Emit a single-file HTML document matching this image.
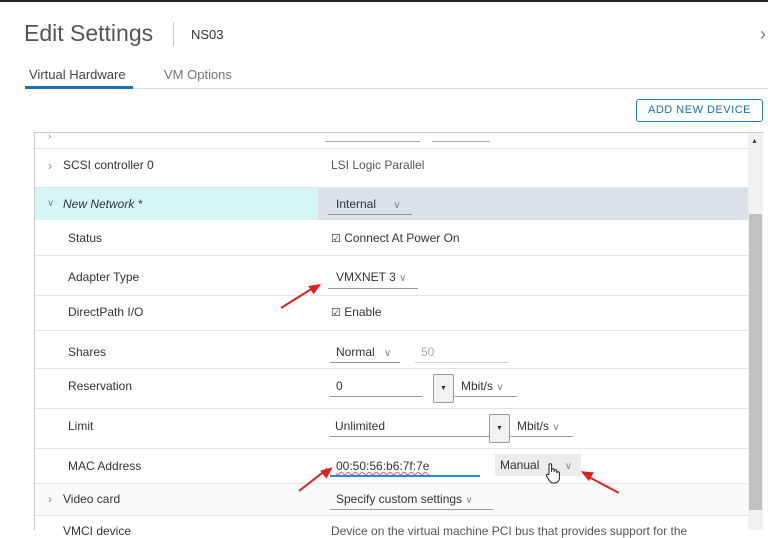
<!DOCTYPE html><html><head><style>
body{margin:0;width:768px;height:530px;overflow:hidden;background:#fff;font-family:"Liberation Sans",sans-serif;position:relative;color:#333}
.a{position:absolute}
.t{font-size:12px;color:#333}
.row{position:absolute;left:35px;width:713px;border-bottom:1px solid #e4e4e4}
.ul{position:absolute;border-bottom:1px solid #999;height:0}
.chev{color:#888;font-size:10px}
.arrow{position:absolute;height:2px;background:#e02020;transform-origin:left center}
</style></head><body>
<div class="a" style="left:0;top:0;width:768px;height:2px;background:#222"></div>
<div class="a" style="left:24px;top:20px;font-size:23px;color:#555">Edit Settings</div>
<div class="a" style="left:173px;top:22px;width:1px;height:24px;background:#ccc"></div>
<div class="a" style="left:191px;top:27px;font-size:13px;color:#333">NS03</div>
<div class="a" style="left:760px;top:24px;font-size:18px;color:#777">›</div>
<div class="a" style="left:29px;top:67px;font-size:13px;color:#444">Virtual Hardware</div>
<div class="a" style="left:164px;top:67px;font-size:13px;color:#777">VM Options</div>
<div class="a" style="left:25px;top:88px;width:743px;height:1px;background:#ddd"></div>
<div class="a" style="left:25px;top:86px;width:108px;height:3px;background:#1a73b8"></div>
<div class="a" style="left:636px;top:99px;width:125px;height:21px;border:1px solid #2a7ab8;border-radius:3px;color:#1a6fb0;font-size:11px;text-align:center;line-height:21px;letter-spacing:.5px">ADD NEW DEVICE</div>
<div class="a" style="left:34px;top:132px;width:1px;height:398px;background:#ccc"></div>
<div class="a" style="left:34px;top:132px;width:730px;height:1px;background:#ccc"></div>
<div class="a" style="left:748px;top:133px;width:15px;height:397px;background:#f1f1f1"></div>
<div class="a" style="left:751px;top:138px;font-size:7px;color:#444">▲</div>
<div class="a" style="left:749px;top:214px;width:13px;height:296px;background:#c1c1c1"></div>
<div class="row" style="top:133px;height:15px"></div>
<div class="a t chev" style="left:48px;top:131px">›</div>
<div class="ul" style="left:325px;top:141px;width:95px;border-color:#aaa"></div>
<div class="ul" style="left:432px;top:141px;width:58px;border-color:#aaa"></div>
<div class="row" style="top:149px;height:38px"></div>
<div class="a chev" style="left:48px;top:159px;font-size:12px">›</div>
<div class="a t" style="left:63px;top:158px">SCSI controller 0</div>
<div class="a t" style="left:331px;top:158px;color:#555">LSI Logic Parallel</div>
<div class="a" style="left:35px;top:188px;width:284px;height:32px;background:#d6f6f6"></div>
<div class="a" style="left:318px;top:188px;width:430px;height:32px;background:#dae1e9"></div>
<div class="a chev" style="left:47px;top:198px">∨</div>
<div class="a t" style="left:63px;top:197px;font-style:italic">New Network *</div>
<div class="a t" style="left:336px;top:197px">Internal <span class="chev" style="margin-left:14px">∨</span></div>
<div class="ul" style="left:328px;top:214px;width:84px"></div>
<div class="row" style="top:220px;height:35px"></div>
<div class="a t" style="left:68px;top:231px">Status</div>
<div class="a t" style="left:331px;top:231px"><span style="font-size:11px">☑</span> Connect At Power On</div>
<div class="row" style="top:256px;height:39px"></div>
<div class="a t" style="left:68px;top:270px">Adapter Type</div>
<div class="a t" style="left:336px;top:270px">VMXNET 3 <span class="chev">∨</span></div>
<div class="ul" style="left:328px;top:288px;width:90px"></div>
<div class="row" style="top:296px;height:34px"></div>
<div class="a t" style="left:68px;top:305px">DirectPath I/O</div>
<div class="a t" style="left:331px;top:305px"><span style="font-size:11px">☑</span> Enable</div>
<div class="row" style="top:331px;height:37px"></div>
<div class="a t" style="left:68px;top:345px">Shares</div>
<div class="a t" style="left:336px;top:345px">Normal <span class="chev" style="margin-left:6px">∨</span></div>
<div class="ul" style="left:330px;top:362px;width:70px"></div>
<div class="a t" style="left:421px;top:345px;color:#aaa">50</div>
<div class="ul" style="left:415px;top:362px;width:93px;border-color:#ccc"></div>
<div class="row" style="top:369px;height:39px"></div>
<div class="a t" style="left:68px;top:379px">Reservation</div>
<div class="a t" style="left:336px;top:379px">0</div>
<div class="ul" style="left:330px;top:396px;width:92px"></div>
<div class="a" style="left:433px;top:374px;width:19px;height:27px;border:1px solid #999;background:#f2f2f2;border-radius:2px;font-size:7px;text-align:center;line-height:27px">▼</div>
<div class="a t" style="left:461px;top:379px">Mbit/s <span class="chev">∨</span></div>
<div class="ul" style="left:455px;top:396px;width:62px"></div>
<div class="row" style="top:409px;height:39px"></div>
<div class="a t" style="left:68px;top:419px">Limit</div>
<div class="a t" style="left:335px;top:419px">Unlimited</div>
<div class="ul" style="left:330px;top:436px;width:160px"></div>
<div class="a" style="left:489px;top:414px;width:19px;height:27px;border:1px solid #999;background:#f2f2f2;border-radius:2px;font-size:7px;text-align:center;line-height:27px">▼</div>
<div class="a t" style="left:517px;top:419px">Mbit/s <span class="chev">∨</span></div>
<div class="ul" style="left:511px;top:436px;width:62px"></div>
<div class="row" style="top:449px;height:34px"></div>
<div class="a t" style="left:68px;top:459px">MAC Address</div>
<div class="a t" style="left:336px;top:459px;text-decoration:underline wavy #e55;text-decoration-thickness:1px">00:50:56:b6:7f:7e</div>
<div class="a" style="left:330px;top:475px;width:150px;height:2px;background:#2b8ad8"></div>
<div class="a t" style="left:495px;top:454px;width:86px;height:22px;background:#ececec;line-height:22px;padding-left:5px;box-sizing:border-box">Manual <span class="chev" style="margin-left:22px">∨</span></div>
<svg class="a" style="left:545px;top:462px" width="16" height="22" viewBox="0 0 16 22"><path d="M4 12V3a1.3 1.3 0 0 1 2.6 0v7V8a1.3 1.3 0 0 1 2.6 0v2-1a1.3 1.3 0 0 1 2.6 0v2a1.3 1.3 0 0 1 2.6 0v5c0 3-2 5-5 5H8c-2 0-3-1-4-3l-2.5-4a1.2 1.2 0 0 1 2-1.3z" fill="#fff" stroke="#222" stroke-width="1"/></svg>
<div class="row" style="top:484px;height:31px;background:#fafafa"></div>
<div class="a chev" style="left:48px;top:492px;font-size:12px">›</div>
<div class="a t" style="left:63px;top:492px">Video card</div>
<div class="a t" style="left:336px;top:492px">Specify custom settings <span class="chev">∨</span></div>
<div class="ul" style="left:330px;top:509px;width:163px"></div>
<div class="a t" style="left:63px;top:524px">VMCI device</div>
<div class="a t" style="left:331px;top:524px;color:#555">Device on the virtual machine PCI bus that provides support for the</div>
<div class="arrow" style="left:281px;top:307px;width:42px;transform:rotate(-32deg)"></div>
<div class="a" style="left:311px;top:281px;width:0;height:0;border-left:5px solid transparent;border-right:5px solid transparent;border-bottom:12px solid #e02020;transform:rotate(58deg)"></div>
<div class="arrow" style="left:299px;top:490px;width:36px;transform:rotate(-38deg)"></div>
<div class="a" style="left:323px;top:465px;width:0;height:0;border-left:5px solid transparent;border-right:5px solid transparent;border-bottom:12px solid #e02020;transform:rotate(52deg)"></div>
<div class="arrow" style="left:587px;top:475px;width:36px;transform:rotate(28deg)"></div>
<div class="a" style="left:581px;top:468px;width:0;height:0;border-left:5px solid transparent;border-right:5px solid transparent;border-bottom:12px solid #e02020;transform:rotate(-62deg)"></div>
</body></html>
